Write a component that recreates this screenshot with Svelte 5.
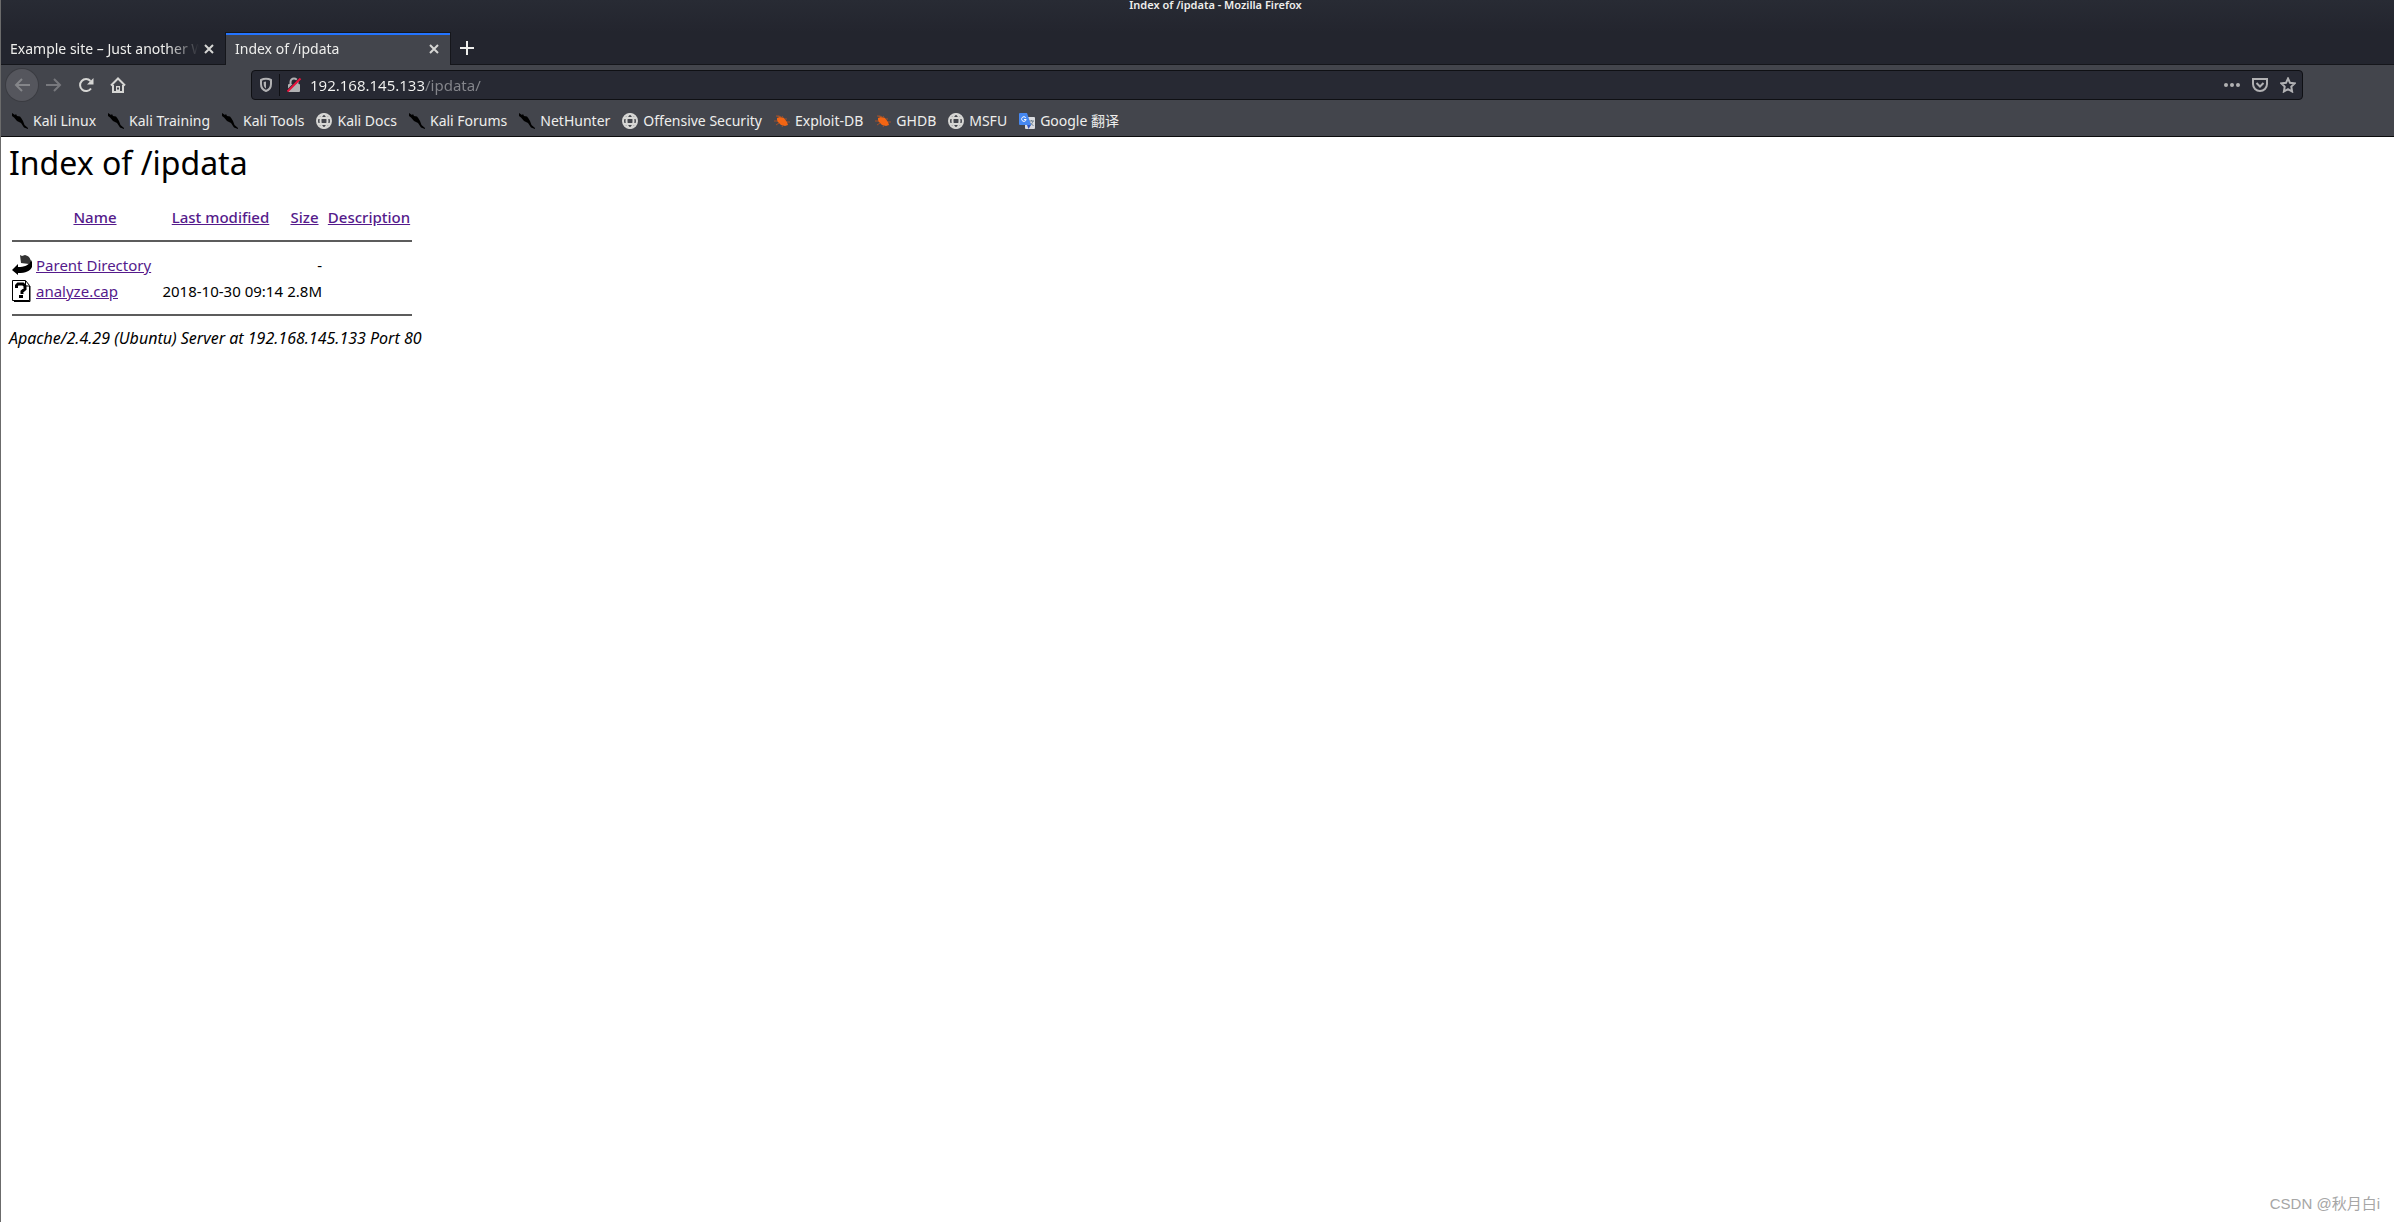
<script lang="ts">
    type Tab = { title: string; active: boolean };
    type Bookmark = { label: string; icon: 'kali' | 'globe' | 'bug' | 'translate' };

    const tabs: Tab[] = [
        { title: 'Example site – Just another W', active: false },
        { title: 'Index of /ipdata', active: true }
    ];

    const bookmarks: Bookmark[] = [
        { label: 'Kali Linux', icon: 'kali' },
        { label: 'Kali Training', icon: 'kali' },
        { label: 'Kali Tools', icon: 'kali' },
        { label: 'Kali Docs', icon: 'globe' },
        { label: 'Kali Forums', icon: 'kali' },
        { label: 'NetHunter', icon: 'kali' },
        { label: 'Offensive Security', icon: 'globe' },
        { label: 'Exploit-DB', icon: 'bug' },
        { label: 'GHDB', icon: 'bug' },
        { label: 'MSFU', icon: 'globe' },
        { label: 'Google 翻译', icon: 'translate' }
    ];

    let address = $state('192.168.145.133/ipdata/');
</script>

<div class="window">
    <header class="chrome">
        <div class="titlebar">Index of /ipdata - Mozilla Firefox</div>

        <div class="tabs">
            {#each tabs as tab}
                <div class="tab" class:active={tab.active}>
                    <button class="tab-title">{tab.title}</button>
                    <button class="close" aria-label="Close tab">
                        <svg width="10" height="10" viewBox="0 0 10 10"><path d="M1 1l8 8M9 1l-8 8" /></svg>
                    </button>
                </div>
            {/each}
            <button class="new-tab" aria-label="New tab">
                <svg width="14" height="14" viewBox="0 0 14 14"><path d="M7 0v14M0 7h14" /></svg>
            </button>
        </div>

        <nav class="toolbar">
            <div class="nav-buttons">
                <button class="back" aria-label="Back">
                    <svg width="16" height="16" viewBox="0 0 16 16"><path d="M16 8H2M8 2L2 8l6 6" /></svg>
                </button>
                <button class="forward" aria-label="Forward">
                    <svg width="16" height="16" viewBox="0 0 16 16"><path d="M0 8h14M8 2l6 6-6 6" /></svg>
                </button>
                <button aria-label="Reload">
                    <svg width="16" height="16" viewBox="0 0 16 16">
                        <path d="M13 11.5A6 6 0 1 1 12.5 4" />
                        <path class="fill" d="M15.500 1v6.500H9z" />
                    </svg>
                </button>
                <button aria-label="Home">
                    <svg width="16" height="16" viewBox="0 0 16 16">
                        <path d="M1 8.5L8 1.500l7 7M3 8v7h10V8" />
                        <path class="fill" d="M6 9h4v6H6z" />
                        <path class="dark" d="M8 10.500v2" />
                    </svg>
                </button>
            </div>

            <div class="urlbar">
                <button class="shield" aria-label="Tracking protection">
                    <svg width="14" height="16" viewBox="0 0 14 16">
                        <path d="M7 1.800c2 0 3.500.4 5 1.200v4c0 3.500-1.500 5.800-5 7-3.500-1.200-5-3.500-5-7V3c1.500-.8 3-1.200 5-1.200z" />
                        <path class="fill" d="M7 4.500v7C5.500 10.500 4.700 9 4.700 7V5z" />
                    </svg>
                </button>
                <button class="lock" aria-label="Connection is not secure">
                    <svg width="16" height="16" viewBox="0 0 16 16">
                        <path d="M4.500 8V5a3.500 3.500 0 0 1 7 0v3" />
                        <rect class="fill" x="2" y="7" width="12" height="8" rx="1" />
                        <path class="gap" d="M1 14L14 1" />
                        <path class="slash" d="M1.500 14.500L14.500 1.500" />
                    </svg>
                </button>
                <input type="text" aria-label="Address" bind:value={address} />
                <button aria-label="Page actions">
                    <svg width="16" height="16" viewBox="0 0 16 16">
                        <circle class="fill" cx="2" cy="8" r="2" />
                        <circle class="fill" cx="8" cy="8" r="2" />
                        <circle class="fill" cx="14" cy="8" r="2" />
                    </svg>
                </button>
                <button aria-label="Save to Pocket">
                    <svg width="16" height="16" viewBox="0 0 16 16">
                        <path d="M1 2h14v5a7 7 0 0 1-14 0z" />
                        <path d="M4.500 6L8 9.500 11.500 6" />
                    </svg>
                </button>
                <button aria-label="Bookmark this page">
                    <svg width="16" height="16" viewBox="0 0 16 16">
                        <path d="M8 1.500l2 4.300 4.700.6-3.400 3.200.8 4.900L8 12.200l-4.100 2.300.8-4.900L1.300 6.400l4.700-.6z" />
                    </svg>
                </button>
            </div>
        </nav>

        <nav class="bookmarks">
            {#each bookmarks as { label, icon }}
                <a href="#{icon}">
                    <svg class={icon} width="16" height="16" viewBox="0 0 16 16">
                        {#if icon === 'kali'}
                            <path d="M0 0l3 2 1-1 1 2 3 .5 1.500 2L11 8l1.500 4 3.500 3v1l-4-1.500L9 10 5 8 2 4.500 0 3z" />
                        {:else if icon === 'globe'}
                            <circle cx="8" cy="8" r="7" />
                            <ellipse cx="8" cy="8" rx="3.500" ry="7" />
                            <path d="M2 5h12M2 11h12" />
                        {:else if icon === 'bug'}
                            <path d="M3 5l3-1 4 1 3 4 1 3-3 1-4-1-4-4z" />
                            <path class="legs" d="M4 8H0M5 10l-3 2M7 4L5 3H2M9 5L8 3M11 6h2M13 9h3M9 12l-1 2" />
                        {:else}
                            <rect x="6" y="4" width="10" height="12" rx="1" fill="#dadce0" />
                            <path d="M10 8h5M12.500 7v1M14 8c-.5 2-1.500 3-3.500 4.500M11 9.500c.8 1.500 2 2.500 3.500 3" fill="none" stroke="#6d7f8e" />
                            <path d="M1 0h7l4 12H1a1 1 0 0 1-1-1V1a1 1 0 0 1 1-1z" fill="#4688f1" />
                            <path d="M8 12h4l-2.500 4z" fill="#3156be" />
                            <path d="M6.800 4.700A2.300 2.300 0 1 0 7.200 6.500H5" fill="none" stroke="#fff" />
                        {/if}
                    </svg>
                    {label}
                </a>
            {/each}
        </nav>
    </header>

    <main>
        <h1>Index of /ipdata</h1>
        <table>
            <thead>
                <tr>
                    <th class="icon" aria-label="Type"></th>
                    <th class="name"><a href="#name">Name</a></th>
                    <th class="modified"><a href="#modified">Last modified</a></th>
                    <th class="size"><a href="#size">Size</a></th>
                    <th class="description"><a href="#description">Description</a></th>
                </tr>
            </thead>
            <tbody>
                <tr><td colspan="5"><hr /></td></tr>
                <tr>
                    <td class="icon">
                        <svg width="20" height="22" viewBox="0 0 20 22">
                            <path d="M8 1l2 1 3-1c4 1 5 3 6 6l-2 3-8-1z" fill="#333" />
                            <path d="M0 16l6-6v3c6 0 11-1 13-7l1 2v5c-2 4-6 6-14 6v2z" />
                        </svg>
                    </td>
                    <td><a href="#parent">Parent Directory</a></td>
                    <td></td>
                    <td class="right">-</td>
                    <td></td>
                </tr>
                <tr>
                    <td class="icon">
                        <svg width="20" height="22" viewBox="0 0 20 22">
                            <path d="M.5.5h13l4 5v15H.5z" fill="#fff" stroke="#000" />
                            <path d="M13.500 1v5H17M2 21.500h16V6" fill="none" stroke="#000" />
                            <path d="M4.500 8V5.500L6 4h5l2 2v3l-3 2.500V14" fill="none" stroke="#000" stroke-width="3" />
                            <path d="M7 15h4v3H7z" />
                        </svg>
                    </td>
                    <td><a href="#analyze">analyze.cap</a></td>
                    <td class="right">2018-10-30 09:14</td>
                    <td class="right">2.8M</td>
                    <td></td>
                </tr>
                <tr><td colspan="5"><hr /></td></tr>
            </tbody>
        </table>
        <address>Apache/2.4.29 (Ubuntu) Server at 192.168.145.133 Port 80</address>
    </main>

    <div class="watermark">CSDN @秋月白i</div>
</div>

<style>
    :global(body) {
        margin: 0;
    }

    .window {
        position: relative;
        box-sizing: border-box;
        min-height: 100vh;
        border-left: 1px solid #6b6b6b;
        background: #fff;
        color: #000;
        font-family: 'Noto Sans', 'Noto Sans CJK SC', sans-serif;
    }

    .chrome {
        background: #43454c;
        border-bottom: 1px solid #0c0c0d;
        color: #eeeeec;
        font-size: 14px;
        line-height: 20px;
    }

    button {
        display: flex;
        align-items: center;
        justify-content: center;
        padding: 0;
        border: 0;
        background: none;
        color: inherit;
        font: inherit;
    }

    .chrome svg {
        flex: none;
        fill: none;
        stroke: currentColor;
        stroke-width: 2;
    }

    .chrome svg .fill {
        fill: currentColor;
        stroke: none;
    }

    .titlebar {
        height: 32px;
        padding-left: 36px;
        background: linear-gradient(#282b34, #23252e);
        font-size: 11px;
        font-weight: 600;
        line-height: 10px;
        text-align: center;
    }

    .tabs {
        display: flex;
        height: 32px;
        background: #23252e;
        border-bottom: 1px solid #15161b;
    }

    .tab {
        box-sizing: border-box;
        display: flex;
        align-items: center;
        width: 224px;
        padding: 1px 6px 0 9px;
    }

    .tab.active {
        width: 226px;
        height: 33px;
        background: #43454c;
        border: 1px solid #15161b;
        border-width: 0 1px;
        box-shadow: inset 0 1px #15161b, inset 0 3px #2374ff;
    }

    .tab-title {
        flex: 1;
        justify-content: flex-start;
        min-width: 0;
        overflow: hidden;
        white-space: nowrap;
        mask-image: linear-gradient(to left, transparent, #000 32px);
    }

    .close {
        flex: none;
        width: 20px;
        height: 20px;
        color: #d6d6d4;
    }

    .new-tab {
        width: 32px;
    }

    .toolbar {
        display: flex;
        align-items: center;
        height: 40px;
        padding: 0 91px 0 5px;
    }

    .nav-buttons {
        display: flex;
        width: 245px;
        color: #d6d6d4;
    }

    .nav-buttons button {
        width: 32px;
        height: 32px;
    }

    .nav-buttons .back {
        border-radius: 50%;
        background: #55565d;
        box-shadow: 0 0 0 1px #3b3c42;
        color: #85868a;
    }

    .nav-buttons .forward {
        color: #77787d;
    }

    .chrome svg .dark {
        stroke: #43454c;
    }

    .urlbar {
        box-sizing: border-box;
        display: flex;
        flex: 1;
        align-items: center;
        height: 30px;
        background: #272933;
        border: 1px solid #0f1014;
        border-radius: 4px;
        color: #b1b1b3;
    }

    .urlbar button {
        width: 28px;
        height: 22px;
    }

    .urlbar .shield {
        border-right: 1px solid #0f1014;
    }

    .chrome svg .gap {
        stroke: #272933;
    }

    .chrome svg .slash {
        stroke: #e8123c;
    }

    /* host part bright, path part dimmed */
    .urlbar input {
        flex: 1;
        min-width: 0;
        padding: 0 0 0 2px;
        border: 0;
        outline: 0;
        background: linear-gradient(to right, #f4f4f2 116px, #85868c 116px);
        background-clip: text;
        color: transparent;
        font: inherit;
        font-size: 15px;
    }

    .bookmarks {
        display: flex;
        align-items: center;
        gap: 12px;
        height: 31px;
        padding: 0 11px;
    }

    .bookmarks a {
        display: flex;
        align-items: center;
        gap: 5px;
        color: inherit;
        text-decoration: none;
        white-space: nowrap;
    }

    .bookmarks .kali {
        fill: #000;
        stroke: none;
    }

    .bookmarks .globe {
        color: #d6d6d4;
    }

    .bookmarks .bug {
        fill: #f26513;
        stroke: none;
    }

    .bug .legs {
        stroke: #a4512a;
        stroke-width: 1;
    }

    .bookmarks .translate {
        stroke: none;
        stroke-width: 1;
    }

    main {
        padding: 8px;
        font-size: 16px;
        line-height: 22px;
    }

    h1 {
        margin: 0 0 22px;
        font-size: 32px;
        font-weight: 400;
        line-height: 36px;
    }

    table {
        border-spacing: 2px;
        font-size: 15px;
    }

    th,
    td {
        padding: 1px;
        white-space: nowrap;
    }

    th {
        font-weight: 500;
    }

    .icon {
        width: 20px;
    }

    .name {
        width: 118px;
    }

    .modified {
        width: 125px;
    }

    .size {
        width: 35px;
    }

    .description {
        width: 86px;
    }

    .icon svg {
        display: block;
    }

    .right {
        text-align: right;
    }

    main a {
        color: #551a8b;
    }

    hr {
        height: 2px;
        margin: 8px 0;
        border: 0;
        background: #5c5c5c;
    }

    .watermark {
        position: absolute;
        right: 14px;
        bottom: 6px;
        color: #a6a6a6;
        font: 15px/24px 'Liberation Sans', 'Noto Sans CJK SC', sans-serif;
    }
</style>
